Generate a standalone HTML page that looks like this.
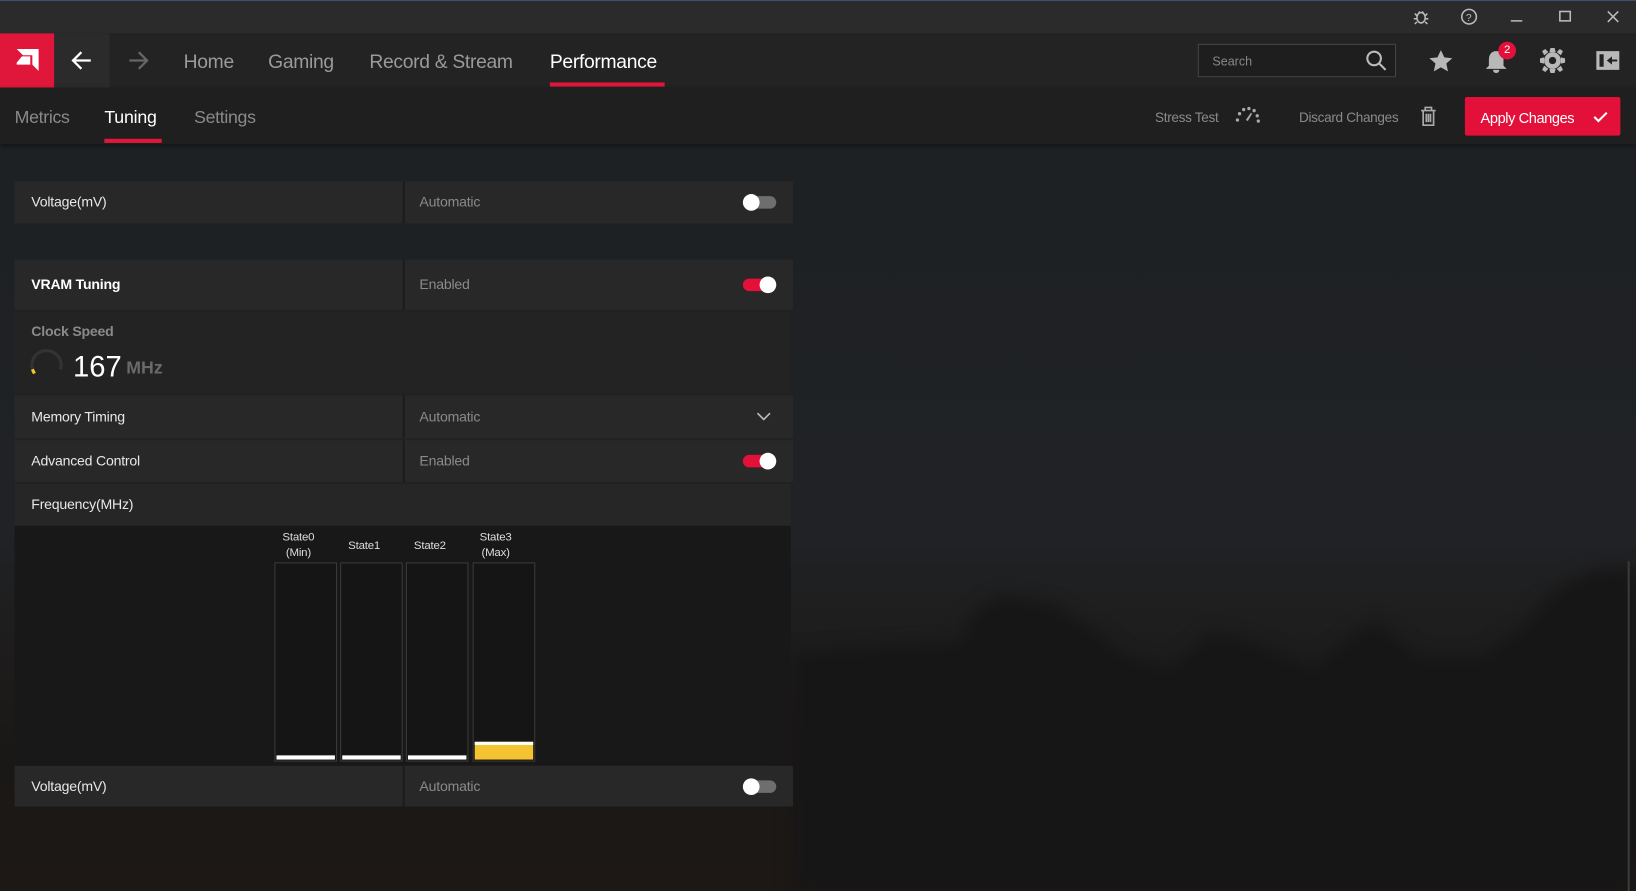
<!DOCTYPE html>
<html><head><meta charset="utf-8">
<style>
html,body{margin:0;padding:0;width:1636px;height:891px;overflow:hidden;background:#1f2124;}
#s{position:absolute;left:0;top:0;width:1568px;height:854px;transform:scale(1.04337,1.04333);transform-origin:0 0;font-family:"Liberation Sans",sans-serif;
background:linear-gradient(180deg,#1d2023 0%,#202225 60%,#1e1d1d 72%,#1a1816 85%,#1d1815 100%);overflow:hidden}
.a{position:absolute}
.t{position:absolute;white-space:nowrap}
.row{position:absolute;left:14px;width:744px;background:#282828}
.row .l{position:absolute;left:16px;top:0;color:#e8e8e8;font-size:13.5px;letter-spacing:-0.2px}
.row .r{position:absolute;left:372px;top:0;width:372px;height:100%;border-left:2px solid #1c1c1c;background:#282828}
.row .r span{position:absolute;left:14px;color:#8a8a8a;font-size:13.5px;letter-spacing:-0.2px}
.tog{position:absolute;left:698px;width:32px;height:12px;border-radius:6px;background:#6e6e6e}
.tog i{position:absolute;left:0;top:-2px;width:16px;height:16px;border-radius:8px;background:#fff}
.tog.on{background:#e3103a}.tog.on i{left:16px}
.bar{position:absolute;top:539px;width:58px;height:189px;border:1px solid #3a3a3a;background:#151515}
.bar b{position:absolute;left:1px;right:1px;bottom:1px;height:4px;background:#fff}
.lab{position:absolute;color:#ddd;font-size:11px;text-align:center;width:60px;line-height:15px;letter-spacing:-0.2px}
.nav{font-size:18.5px;letter-spacing:-0.3px;top:48px}
</style></head><body><div id="s">
<svg class="a" style="left:0;top:0;filter:blur(8px)" width="1568" height="854"><path d="M760 690 L760 625 L920 615 L930 590 L960 570 L1010 580 L1050 605 L1080 630 L1120 640 L1140 625 L1160 605 L1200 615 L1260 640 L1300 605 L1320 595 L1360 630 L1420 630 L1460 600 L1490 565 L1530 545 L1568 545 L1568 854 L760 854Z" fill="#171616"/></svg>
<div class="a" style="left:0;top:0;width:1568px;height:32px;background:#2b2b2b;border-top:1px solid #3a5070;box-sizing:border-box"></div>
<svg class="a" style="left:1352px;top:7px" width="200" height="20" fill="none" stroke="#bbb" stroke-width="1.5">
<ellipse cx="10" cy="10" rx="4" ry="5"/><path d="M4 6l2 2M16 6l-2 2M3 11h3M14 11h3M4 16l2-2M16 16l-2-2M8 4l1 2M12 4l-1 2"/>
<circle cx="56" cy="9" r="7"/><text x="53" y="13" font-size="10" fill="#bbb" stroke="none" font-family="Liberation Sans">?</text>
<path d="M96 13h11"/><rect x="143" y="4" width="10" height="9"/><path d="M189 4l10 10M199 4l-10 10"/></svg>
<div class="a" style="left:0;top:32px;width:1568px;height:52px;background:#232323"></div>
<div class="a" style="left:0;top:32px;width:52px;height:52px;background:#e0173a"></div>
<svg class="a" style="left:12px;top:44px" width="28" height="28"><path d="M4 3h21v21l-6-6V9H10z" fill="#fff"/><path d="M9 10h8v8h-8z M4 16l5-6v8h-5z" fill="#fff"/></svg>
<div class="a" style="left:52px;top:32px;width:53px;height:52px;background:#2b2b2b"></div>
<svg class="a" style="left:68px;top:48px" width="80" height="22" fill="none" stroke-width="2.2"><path d="M2 10h17M10 2l-8 8 8 8" stroke="#fff"/><path d="M56 10h17M65 2l8 8-8 8" stroke="#666"/></svg>
<div class="t nav" style="left:176px;color:#9a9a9a">Home</div>
<div class="t nav" style="left:257px;color:#9a9a9a">Gaming</div>
<div class="t nav" style="left:354px;color:#9a9a9a">Record &amp; Stream</div>
<div class="t nav" style="left:527px;color:#fff">Performance</div>
<div class="a" style="left:527px;top:79px;width:110px;height:4px;background:#e0173a"></div>
<div class="a" style="left:1148px;top:42px;width:188px;height:30px;border:1px solid #454545;background:#1e1e1e"></div>
<div class="t" style="left:1162px;top:52px;font-size:12px;color:#888">Search</div>
<svg class="a" style="left:1308px;top:47px" width="24" height="22" fill="none" stroke="#bbb" stroke-width="2"><circle cx="9" cy="9" r="6.5"/><path d="M14 14l6 6"/></svg>
<svg class="a" style="left:1368px;top:46px" width="190" height="26" fill="#b8b8b8">
<path d="M13 2l3.3 7 7.6.8-5.7 5.1 1.6 7.5L13 18.6 6.2 22.4l1.6-7.5L2 9.8l7.7-.8z"/>
<path d="M66 3c-5 0-7 4-7 8v6l-3 3h20l-3-3v-6c0-4-2-8-7-8zM63 21h6c0 2-1.5 3-3 3s-3-1-3-3z"/>
<circle cx="120" cy="12" r="8"/><circle cx="120" cy="12" r="3.5" fill="#232323"/>
<path d="M118 0h4l1 4h-6zM118 24h4l1-4h-6zM108 10v4l4 1v-6zM132 10v4l-4 1v-6zM110 3l3-2 3 3-4 3zM130 3l-3-2-3 3 4 3zM110 21l3 2 3-3-4-3zM130 21l-3 2-3-3 4-3z"/>
<path d="M162 3h22v18h-22z M165 6v12h4V6z M172 12l5-4v3h5v2h-5v3z" fill-rule="evenodd"/>
</svg>
<div class="a" style="left:1436px;top:40px;width:17px;height:17px;border-radius:9px;background:#e3103a;color:#fff;font-size:11px;text-align:center;line-height:17px">2</div>
<div class="a" style="left:0;top:84px;width:1568px;height:54px;background:#1f1f1f;box-shadow:0 2px 4px rgba(0,0,0,.4)"></div>
<div class="t" style="left:14px;top:103px;font-size:17px;color:#8a8a8a;letter-spacing:-0.3px">Metrics</div>
<div class="t" style="left:100px;top:103px;font-size:17px;color:#fff;letter-spacing:-0.2px">Tuning</div>
<div class="t" style="left:186px;top:103px;font-size:17px;color:#8a8a8a;letter-spacing:-0.3px">Settings</div>
<div class="a" style="left:100px;top:133px;width:55px;height:4px;background:#e0173a"></div>
<div class="t" style="left:1107px;top:105px;font-size:13px;color:#8a8a8a;letter-spacing:-0.3px">Stress Test</div>
<svg class="a" style="left:1183px;top:102px" width="26" height="16" fill="#aaa"><circle cx="3" cy="13" r="1.6"/><circle cx="5" cy="7" r="1.6"/><circle cx="9" cy="3" r="1.6"/><circle cx="14" cy="2" r="1.6"/><circle cx="19" cy="4" r="1.6"/><circle cx="22" cy="9" r="1.6"/><circle cx="23" cy="14" r="1.6"/><path d="M11 13l5-7 1 1-4 7z"/></svg>
<div class="t" style="left:1245px;top:105px;font-size:13px;color:#8a8a8a;letter-spacing:-0.3px">Discard Changes</div>
<svg class="a" style="left:1361px;top:102px" width="16" height="20" fill="none" stroke="#aaa" stroke-width="1.6"><path d="M1 4h14M5 4V1h6v3M3 4v14h10V4M6 7v8M8 7v8M10 7v8"/></svg>
<div class="a" style="left:1404px;top:93px;width:149px;height:37px;background:#e3103a;border-radius:2px"></div>
<div class="t" style="left:1419px;top:105px;font-size:14px;color:#fff;letter-spacing:-0.4px">Apply Changes</div>
<svg class="a" style="left:1526px;top:106px" width="16" height="12" fill="none" stroke="#fff" stroke-width="2"><path d="M2 6l4 4 8-8"/></svg>
<div class="row" style="top:174px;height:40px"><div class="l" style="line-height:40px">Voltage(mV)</div><div class="r"><span style="line-height:40px">Automatic</span></div><div class="tog" style="top:14px"><i></i></div></div>
<div class="row" style="top:249px;height:48px"><div class="l" style="line-height:48px;font-weight:bold;color:#fff">VRAM Tuning</div><div class="r"><span style="line-height:48px">Enabled</span></div><div class="tog on" style="top:18px"><i></i></div></div>
<div class="a" style="left:14px;top:299px;width:744px;height:78px;background:#232323"></div>
<div class="t" style="left:30px;top:310px;font-size:13.5px;color:#8a8a8a;font-weight:bold;letter-spacing:-0.2px">Clock Speed</div>
<svg class="a" style="left:28px;top:334px" width="36" height="30" fill="none" stroke-width="3"><path d="M5 24A14 14 0 1 1 30 20" stroke="#333"/><path d="M5 24l-2-4" stroke="#f6c330"/></svg>
<div class="t" style="left:70px;top:336px;font-size:28px;color:#fff">167</div>
<div class="t" style="left:121px;top:343px;font-size:17px;color:#6a6a6a;font-weight:bold">MHz</div>
<div class="row" style="top:379px;height:41px"><div class="l" style="line-height:41px">Memory Timing</div><div class="r"><span style="line-height:41px">Automatic</span></div>
<svg class="a" style="left:711px;top:15px" width="14" height="10" fill="none" stroke="#bbb" stroke-width="1.6"><path d="M1 2l6 6 6-6"/></svg></div>
<div class="row" style="top:422px;height:40px"><div class="l" style="line-height:40px">Advanced Control</div><div class="r"><span style="line-height:40px">Enabled</span></div><div class="tog on" style="top:14px"><i></i></div></div>
<div class="row" style="top:464px;height:40px;background:#262626"><div class="l" style="line-height:40px">Frequency(MHz)</div></div>
<div class="a" style="left:14px;top:504px;width:744px;height:229px;background:#181818"></div>
<div class="lab" style="left:256px;top:508px">State0<br>(Min)</div>
<div class="lab" style="left:319px;top:516px">State1</div>
<div class="lab" style="left:382px;top:516px">State2</div>
<div class="lab" style="left:445px;top:508px">State3<br>(Max)</div>
<div class="bar" style="left:263px"><b></b></div>
<div class="bar" style="left:326px"><b></b></div>
<div class="bar" style="left:389px"><b></b></div>
<div class="bar" style="left:453px"><b style="height:14px;background:#f6c330;border-top:3px solid #fff"></b></div>
<div class="row" style="top:734px;height:39px"><div class="l" style="line-height:39px">Voltage(mV)</div><div class="r"><span style="line-height:39px">Automatic</span></div><div class="tog" style="top:14px"><i></i></div></div>
<div class="a" style="left:1560px;top:538px;width:2px;height:316px;background:#3a3a3a"></div>
</div></body></html>
